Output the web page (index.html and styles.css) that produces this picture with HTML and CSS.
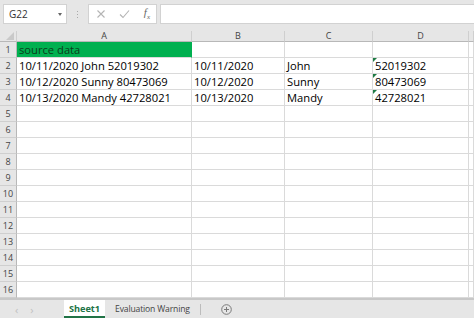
FILE: index.html
```html
<!DOCTYPE html>
<html>
<head>
<meta charset="utf-8">
<link rel="stylesheet" href="styles.css">
</head>
<body>
<div class="app">
  <div class="toolbar">
    <div class="namebox"><span>G22</span><span class="caret"></span></div>
    <div class="grip"><i></i><i></i><i></i></div>
    <div class="fbtns">
      <svg width="10" height="10" viewBox="0 0 10 10"><path d="M1.5 1.5l7 7M8.5 1.5l-7 7" stroke="#b4b4b4" stroke-width="1.1" fill="none"/></svg>
      <svg width="11" height="10" viewBox="0 0 11 10"><path d="M1 5.5l3 3 6-7" stroke="#b4b4b4" stroke-width="1.1" fill="none"/></svg>
      <span class="fx">f<sub>x</sub></span>
    </div>
    <div class="formula"></div>
  </div>
  <div class="grid">
    <div class="hd corner"><svg width="8" height="8" viewBox="0 0 8 8"><path d="M8 0V8H0Z" fill="#c9c9c9"/></svg></div>
    <div class="hd">A</div><div class="hd">B</div><div class="hd">C</div><div class="hd">D</div><div class="hd"></div>

    <div class="rh">1</div><div class="c green">source data</div><div class="c"></div><div class="c"></div><div class="c"></div><div class="c"></div>
    <div class="rh">2</div><div class="c">10/11/2020 John 52019302</div><div class="c">10/11/2020</div><div class="c">John</div><div class="c num">52019302</div><div class="c"></div>
    <div class="rh">3</div><div class="c">10/12/2020 Sunny 80473069</div><div class="c">10/12/2020</div><div class="c">Sunny</div><div class="c num">80473069</div><div class="c"></div>
    <div class="rh">4</div><div class="c">10/13/2020 Mandy 42728021</div><div class="c">10/13/2020</div><div class="c">Mandy</div><div class="c num">42728021</div><div class="c"></div>
    <div class="rh">5</div><div class="c"></div><div class="c"></div><div class="c"></div><div class="c"></div><div class="c"></div>
    <div class="rh">6</div><div class="c"></div><div class="c"></div><div class="c"></div><div class="c"></div><div class="c"></div>
    <div class="rh">7</div><div class="c"></div><div class="c"></div><div class="c"></div><div class="c"></div><div class="c"></div>
    <div class="rh">8</div><div class="c"></div><div class="c"></div><div class="c"></div><div class="c"></div><div class="c"></div>
    <div class="rh">9</div><div class="c"></div><div class="c"></div><div class="c"></div><div class="c"></div><div class="c"></div>
    <div class="rh">10</div><div class="c"></div><div class="c"></div><div class="c"></div><div class="c"></div><div class="c"></div>
    <div class="rh">11</div><div class="c"></div><div class="c"></div><div class="c"></div><div class="c"></div><div class="c"></div>
    <div class="rh">12</div><div class="c"></div><div class="c"></div><div class="c"></div><div class="c"></div><div class="c"></div>
    <div class="rh">13</div><div class="c"></div><div class="c"></div><div class="c"></div><div class="c"></div><div class="c"></div>
    <div class="rh">14</div><div class="c"></div><div class="c"></div><div class="c"></div><div class="c"></div><div class="c"></div>
    <div class="rh">15</div><div class="c"></div><div class="c"></div><div class="c"></div><div class="c"></div><div class="c"></div>
    <div class="rh">16</div><div class="c"></div><div class="c"></div><div class="c"></div><div class="c"></div><div class="c"></div>
  </div>
  <div class="tabbar">
    <div class="nav"><span>&#8249;</span><span>&#8250;</span></div>
    <div class="tab active">Sheet1</div>
    <div class="tab">Evaluation Warning</div>
    <div class="sep"></div>
    <div class="add"><svg width="11" height="11" viewBox="0 0 11 11"><circle cx="5.5" cy="5.5" r="4.8" stroke="#7a7a7a" fill="none"/><path d="M5.5 3v5M3 5.5h5" stroke="#7a7a7a"/></svg></div>
  </div>
</div>
</body>
</html>
```

FILE: styles.css
```css
* { box-sizing: border-box; }
html, body { margin: 0; padding: 0; }
body { width: 474px; height: 318px; overflow: hidden; background: #fff; font-family: "Open Sans", "Liberation Sans", sans-serif; }
.app { width: 474px; height: 318px; display: flex; flex-direction: column; overflow: hidden; }

.toolbar { height: 31px; flex: none; background: #e6e6e6; display: flex; align-items: flex-start; padding-top: 4px; padding-left: 3px; }
.namebox { width: 64px; height: 20px; background: #fff; border: 1px solid #d2d2d2; display: flex; align-items: center; justify-content: space-between; padding: 0 4px 0 5px; font-size: 10px; color: #333; }
.caret { width: 0; height: 0; border-left: 2.5px solid transparent; border-right: 2.5px solid transparent; border-top: 3px solid #666; }
.grip { width: 21px; height: 20px; display: flex; flex-direction: column; align-items: center; justify-content: center; gap: 2px; }
.grip i { display: block; width: 1px; height: 1px; background: #aaa; }
.fbtns { width: 69px; height: 20px; background: #fff; border: 1px solid #d2d2d2; display: flex; align-items: center; justify-content: space-between; padding: 0 6px 0 7px; }
.fx { font-family: "Liberation Serif", serif; font-style: italic; font-size: 11px; color: #666; line-height: 1; }
.fx sub { font-size: 7px; }
.formula { flex: 1; height: 20px; margin-left: 3px; background: #fff; border: 1px solid #d2d2d2; border-right: none; }

.grid { flex: none; display: grid; grid-template-columns: 17px 175px 93px 88px 96px 1fr; grid-template-rows: 11px repeat(16, 16px); height: 267px; }
.hd { background: #e6e6e6; border-right: 1px solid #cfcfcf; border-bottom: 1px solid #b8b8b8; font-size: 9px; line-height: 10px; color: #444; text-align: center; }
.corner { display: flex; align-items: flex-end; justify-content: flex-end; padding: 0 2px 1px 0; }
.rh { background: #e6e6e6; border-right: 1px solid #b8b8b8; border-bottom: 1px solid #cfcfcf; font-size: 9px; line-height: 16px; color: #444; text-align: center; }
.c { border-right: 1px solid #dadada; border-bottom: 1px solid #dadada; font-size: 11.2px; line-height: 15px; padding-left: 2px; color: #000; white-space: nowrap; overflow: hidden; position: relative; }
.green { background: #00b050; color: #0d3b1c; border-right-color: #00b050; }
.num::before { content: ""; position: absolute; left: 0; top: 0; width: 0; height: 0; border-top: 4px solid #1e7b44; border-right: 4px solid transparent; }

.tabbar { flex: 1; background: #e6e6e6; border-top: 2px solid #c8c8c8; display: flex; align-items: stretch; }
.nav { width: 62px; display: flex; align-items: center; gap: 12px; padding-left: 15px; color: #c0c0c0; font-size: 11px; }
.tab { font-size: 8.6px; letter-spacing: -0.15px; color: #444; display: flex; align-items: center; padding: 0 10px; }
.tab.active { background: #fff; color: #217346; font-weight: bold; font-size: 9.2px; letter-spacing: 0; width: 41px; justify-content: center; padding: 0; margin-left: 2px; border-bottom: 2px solid #217346; }
.sep { width: 1px; height: 11px; background: #bcbcbc; align-self: center; }
.add { display: flex; align-items: center; margin-left: 20px; }
```
